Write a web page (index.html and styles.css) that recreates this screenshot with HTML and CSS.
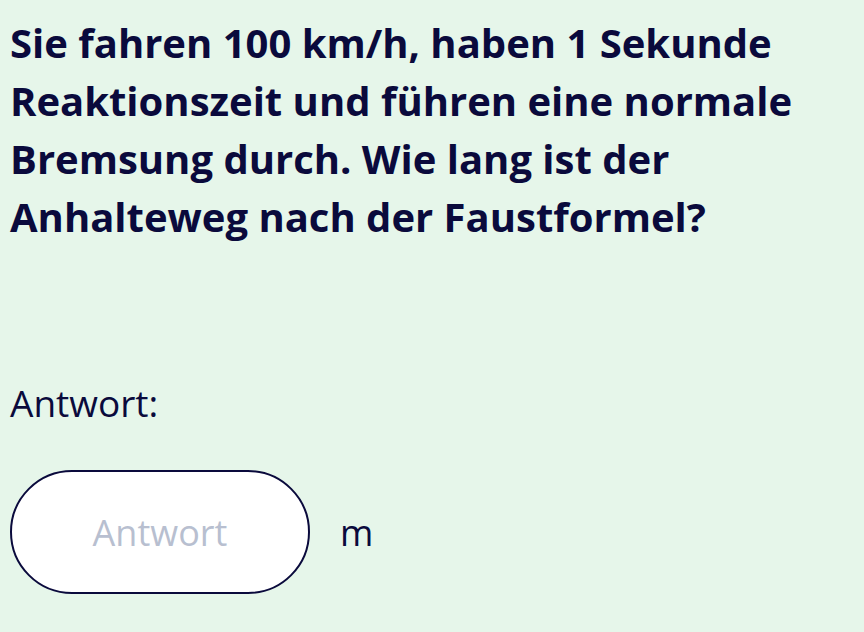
FILE: index.html
```html
<!DOCTYPE html>
<html lang="de">
<head>
    <meta charset="UTF-8">
    <title>Faustformel Anhalteweg</title>
    <link rel="stylesheet" href="styles.css">
</head>
<body>
    <div class="question">
        <h1 class="questionText">Sie fahren 100 km/h, haben 1 Sekunde Reaktionszeit und führen eine normale Bremsung durch. Wie lang ist der Anhalteweg nach der Faustformel?</h1>
        <p class="answerLabel">Antwort:</p>
        <div class="answerRow">
            <input type="text" class="answerInput" placeholder="Antwort">
            <span class="answerUnit">m</span>
        </div>
    </div>
</body>
</html>
```

FILE: styles.css
```css
*{
    margin: 0;
    padding: 0;
    box-sizing: border-box;
}
html,body{
    height: 100%;
}
body{
    background: #e6f6ea;
    color: #0a0a3c;
    font-family: "Open Sans", "Noto Sans", sans-serif;
}
.question{
    padding: 14px 10px;
}
.questionText{
    font-size: 40px;
    line-height: 58px;
    font-weight: 700;
}
.answerLabel{
    margin-top: 132px;
    font-size: 37px;
    line-height: 50px;
}
.answerRow{
    display: flex;
    align-items: center;
    gap: 30px;
    margin-top: 42px;
}
.answerInput{
    width: 300px;
    height: 124px;
    border: 2px solid #0a0a3c;
    border-radius: 62px;
    background: #fff;
    text-align: center;
    font-family: inherit;
    font-size: 36px;
    color: #0a0a3c;
    outline: none;
}
.answerInput::placeholder{
    color: #b8bfd0;
}
.answerUnit{
    font-size: 36px;
}
```
